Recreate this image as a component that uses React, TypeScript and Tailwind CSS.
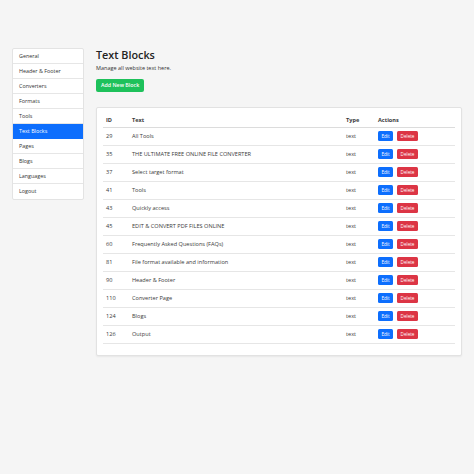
const menu = [
  'General',
  'Header & Footer',
  'Converters',
  'Formats',
  'Tools',
  'Text Blocks',
  'Pages',
  'Blogs',
  'Languages',
  'Logout',
];

const blocks = [
  { id: 29, text: 'All Tools' },
  { id: 35, text: 'THE ULTIMATE FREE ONLINE FILE CONVERTER' },
  { id: 37, text: 'Select target format' },
  { id: 41, text: 'Tools' },
  { id: 43, text: 'Quickly access' },
  { id: 45, text: 'EDIT & CONVERT PDF FILES ONLINE' },
  { id: 60, text: 'Frequently Asked Questions (FAQs)' },
  { id: 81, text: 'File format available and information' },
  { id: 90, text: 'Header & Footer' },
  { id: 110, text: 'Converter Page' },
  { id: 124, text: 'Blogs' },
  { id: 126, text: 'Output' },
];

export default function App() {
  return (
    <div
      className="min-h-screen bg-[#f5f5f5] text-[#212529]"
      style={{ fontFamily: '"Open Sans", "Noto Sans", sans-serif' }}
    >
      <div className="flex items-start gap-[12px] px-[12px] pt-[48px]">
        {/* Sidebar */}
        <nav className="w-[72px] shrink-0 bg-white border border-[#e3e3e3] rounded-[2px] overflow-hidden">
          {menu.map((item, i) => (
            <div
              key={item}
              className={
                item === 'Text Blocks'
                  ? 'h-[15px] flex items-center px-[6px] text-[5.4px] bg-[#0d6efd] text-white'
                  : 'h-[15px] flex items-center px-[6px] text-[5.4px] text-[#333] border-[#e6e6e6] ' +
                    (i < menu.length - 1 ? 'border-b' : '')
              }
            >
              {item}
            </div>
          ))}
        </nav>

        {/* Main */}
        <main className="flex-1">
          <h1 className="text-[10.8px] leading-[13px] font-semibold text-[#222]">Text Blocks</h1>
          <p className="text-[5.5px] leading-[8px] text-[#333] mt-[3px]">Manage all website text here.</p>
          <button className="mt-[7px] h-[13px] px-[5px] rounded-[2px] bg-[#1ec15b] text-white text-[5.3px] font-semibold flex items-center">
            Add New Block
          </button>

          <div className="mt-[15px] bg-white border border-[#e2e2e2] rounded-[2px] shadow-[0_1px_2px_rgba(0,0,0,0.06)] px-[6px] pt-[5px] pb-[11px]">
            <table className="w-full border-collapse text-[5.6px] text-[#3a3a3a]">
              <thead>
                <tr className="h-[14px] border-b border-[#dcdcdc]">
                  <th className="text-left font-bold pl-[3px] w-[29px]">ID</th>
                  <th className="text-left font-bold">Text</th>
                  <th className="text-left font-bold w-[32px]">Type</th>
                  <th className="text-left font-bold w-[77px]">Actions</th>
                </tr>
              </thead>
              <tbody>
                {blocks.map((b) => (
                  <tr key={b.id} className="h-[18px] border-b border-[#e6e6e6]">
                    <td className="pl-[3px]">{b.id}</td>
                    <td>{b.text}</td>
                    <td>text</td>
                    <td>
                      <div className="flex gap-[4px]">
                        <span className="h-[10px] w-[15px] rounded-[1.5px] bg-[#0d6efd] text-white text-[4.6px] flex items-center justify-center">
                          Edit
                        </span>
                        <span className="h-[10px] w-[21px] rounded-[1.5px] bg-[#dc3545] text-white text-[4.6px] flex items-center justify-center">
                          Delete
                        </span>
                      </div>
                    </td>
                  </tr>
                ))}
              </tbody>
            </table>
          </div>
        </main>
      </div>
    </div>
  );
}
